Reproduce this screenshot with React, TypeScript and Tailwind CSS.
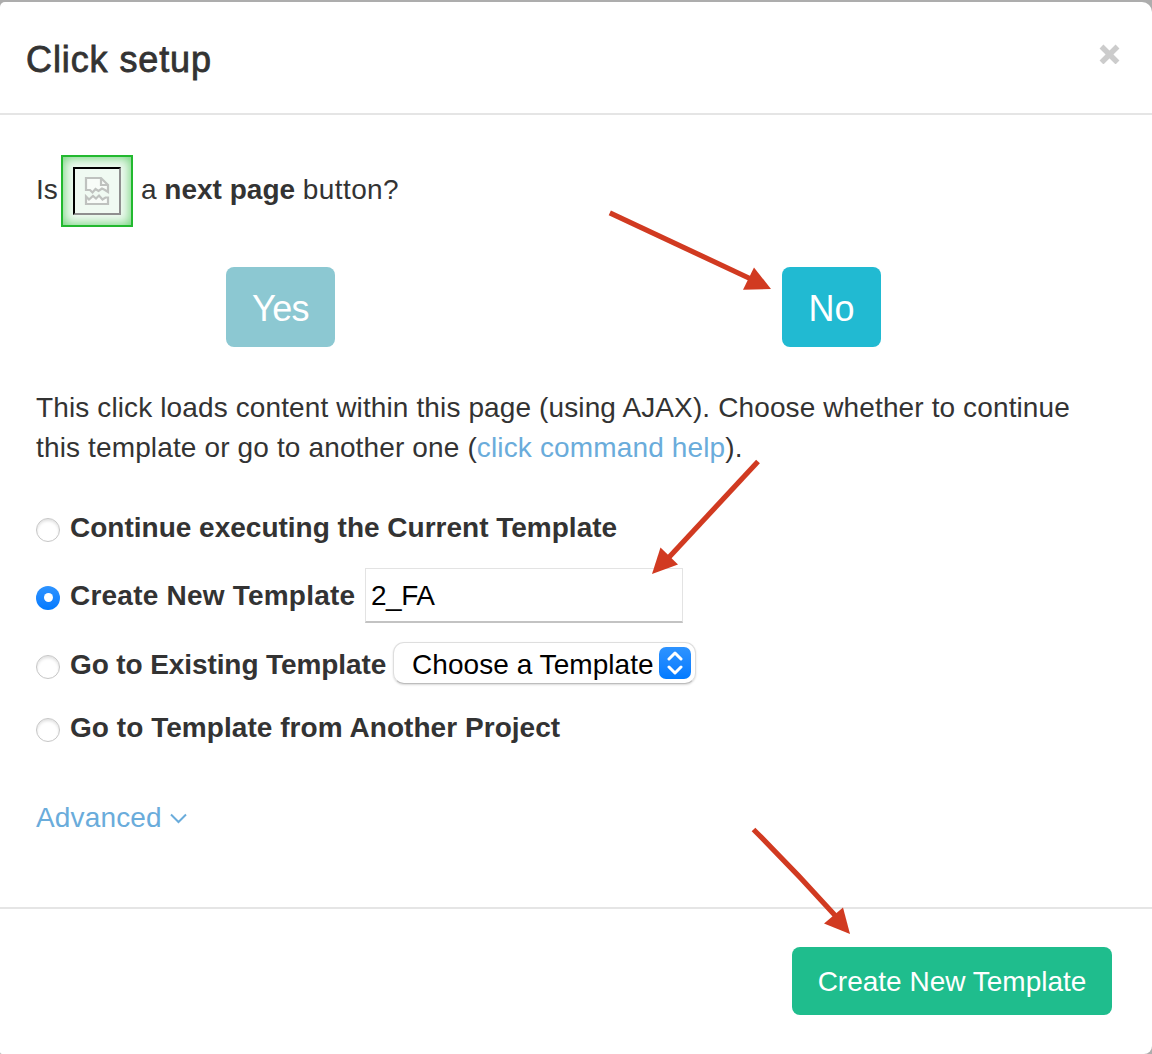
import { useState } from "react";

const arrows = [
  { line: "M609.800 212.800L752 279.500", head: "754,267.500 771,289 743,289.800" },
  { line: "M758 461.500L666 560.500", head: "660.500,547.500 678,564.500 652,574" },
  { line: "M753.500 829.500Q796 872 837 917.500", head: "843,907.500 850,934 824,923.500" },
];

function Arrows() {
  return (
    <svg className="absolute inset-0 pointer-events-none" width="1152" height="1054" viewBox="0 0 1152 1054" fill="none">
      {arrows.map((a) => (
        <g key={a.line}>
          <path d={a.line} stroke="#d13a21" strokeWidth="5.2" />
          <polygon points={a.head} fill="#d13a21" />
        </g>
      ))}
    </svg>
  );
}

function BrokenImage() {
  return (
    <span className="w-[72px] h-[72px] border-2 border-[#22b92f] bg-[#effaf1] shadow-[inset_0_0_11px_1px_#6fd178] flex items-center justify-center shrink-0">
      <span className="w-12 h-12 border-2 border-t-black border-l-black border-r-[#8f8f8f] border-b-[#8f8f8f] bg-[#f0faf2] flex items-center justify-center">
        <svg width="26" height="30" viewBox="0 0 26 30" fill="none" stroke="#bfc2bf" strokeWidth="2.200">
          <path d="M2 14V2H17L24 9V16L21 14L18 12.500L14.500 15L11.500 13L8.500 16.500L6 14Z" fill="#f8fcf8" />
          <path d="M17 2V9H24" />
          <path d="M2 28V20.500L5 23.500L9 20L12 22.500L15 19.500L18.500 23.500L21.500 21.500L24 21.500V28Z" fill="#f8fcf8" />
        </svg>
      </span>
    </span>
  );
}

function Radio({ checked, onClick }: { checked: boolean; onClick: () => void }) {
  if (checked) {
    return (
      <button onClick={onClick} className="w-6 h-6 mt-1 mr-2.5 rounded-full bg-linear-to-b from-[#2d93ff] to-[#007aff] flex items-center justify-center shrink-0">
        <span className="w-[9px] h-[9px] rounded-full bg-white" />
      </button>
    );
  }
  return (
    <button onClick={onClick} className="w-6 h-6 mt-1 mr-2.5 rounded-full bg-white border border-[#c6c6c6] shadow-[inset_0_2px_3px_rgba(0,0,0,0.12)] shrink-0" />
  );
}

export default function App() {
  const [selected, setSelected] = useState(1);
  const [name, setName] = useState("2_FA");

  return (
    <div className="relative w-[1152px] h-[1054px] bg-[#adadad] pt-0.5 overflow-hidden font-['Liberation_Sans',Arial,sans-serif] text-[28px] leading-10 text-[#333]">
      <div className="h-[1052px] bg-white rounded-tl-[5px] rounded-tr-[10px] rounded-br-[8px] rounded-bl-[2px] flex flex-col">
        <div className="h-[113px] border-b-2 border-[#e5e5e5] flex justify-between pl-[26px] pr-8 shrink-0">
          <h4 className="text-[36px] leading-[40px] mt-[38px] tracking-[0.9px] [-webkit-text-stroke:0.8px_#333]">Click setup</h4>
          <button className="h-5 mt-[42px]">
            <svg width="21" height="20" viewBox="0 0 21 20" stroke="#cccccc" strokeWidth="5.500">
              <path d="M2.500 2.500L18.500 18.500M18.500 2.500L2.500 18.500" />
            </svg>
          </button>
        </div>

        <div className="h-[794px] border-b-2 border-[#e5e5e5] px-9 pt-10 shrink-0">
          <div className="flex h-[72px]">
            <span className="mt-[15px] w-[25px]">Is</span>
            <BrokenImage />
            <span className="mt-[15px] ml-2 whitespace-nowrap">
              a <b>next page</b> <span className="tracking-[0.4px]">button?</span>
            </span>
          </div>

          <div className="flex mt-10 h-20 text-[36px] text-white">
            <button className="w-[109px] ml-[190px] rounded-lg bg-[#8cc8d2] pt-1 tracking-[-0.6px]">Yes</button>
            <button className="w-[99px] ml-[447px] rounded-lg bg-[#21bad2] pt-1">No</button>
          </div>

          <p className="mt-[41px] whitespace-nowrap tracking-[0.12px]">
            This click loads content within this page (using AJAX). Choose whether to continue
            <br />
            <span className="tracking-[0.14px]">
              this template or go to another one (<a className="text-[#6aacdb]">click command help</a>).
            </span>
          </p>

          <div className="font-bold whitespace-nowrap mt-10">
            <div className="flex items-center h-10">
              <Radio checked={selected === 0} onClick={() => setSelected(0)} />
              <span>Continue executing the Current Template</span>
            </div>
            <div className="flex items-center h-[55px] mt-5">
              <Radio checked={selected === 1} onClick={() => setSelected(1)} />
              <span className="w-[295px] tracking-[0.22px]">Create New Template</span>
              <input
                className="w-[318px] h-[55px] border border-[#e3e3e3] border-b-2 border-b-[#c3c3c3] pl-[5px] pt-0.5 font-normal text-black tracking-[-0.5px] outline-none"
                type="text"
                value={name}
                onChange={(e) => setName(e.target.value)}
              />
            </div>
            <div className="flex items-center h-[43px] mt-5">
              <Radio checked={selected === 2} onClick={() => setSelected(2)} />
              <span className="w-[323px] tracking-[-0.1px]">Go to Existing Template</span>
              <button className="w-[303px] h-[42px] mb-[3px] rounded-[11px] border border-[#dedede] border-b-[#bdbdbd] shadow-[0_1px_2px_rgba(0,0,0,0.15)] flex items-center justify-between pl-[18px] pr-1 font-normal text-black">
                <span className="mt-1 tracking-[0.05px]">Choose a Template</span>
                <span className="w-8 h-8 rounded-[7px] bg-linear-to-b from-[#2d93ff] to-[#007aff] flex items-center justify-center">
                  <svg width="16" height="24" viewBox="0 0 16 24" fill="none" stroke="white" strokeWidth="3" strokeLinecap="round" strokeLinejoin="round">
                    <path d="M2 8L8 2L14 8M2 16L8 22L14 16" />
                  </svg>
                </span>
              </button>
            </div>
            <div className="flex items-center h-10 mt-[22px]">
              <Radio checked={selected === 3} onClick={() => setSelected(3)} />
              <span className="tracking-[0.05px]">Go to Template from Another Project</span>
            </div>
          </div>

          <a className="flex items-center mt-[50px] text-[#6aacdb] tracking-[0.15px]">
            Advanced
            <svg className="ml-[8px]" width="17" height="11" viewBox="0 0 17 11" fill="none" stroke="#6aacdb" strokeWidth="2">
              <path d="M1 1.500L8.500 9L16 1.500" />
            </svg>
          </a>
        </div>

        <div className="flex justify-end pt-[38px] pr-10">
          <button className="w-80 h-[68px] rounded-lg bg-[#1fbd8d] text-white pt-0.5">Create New Template</button>
        </div>
      </div>
      <Arrows />
    </div>
  );
}
